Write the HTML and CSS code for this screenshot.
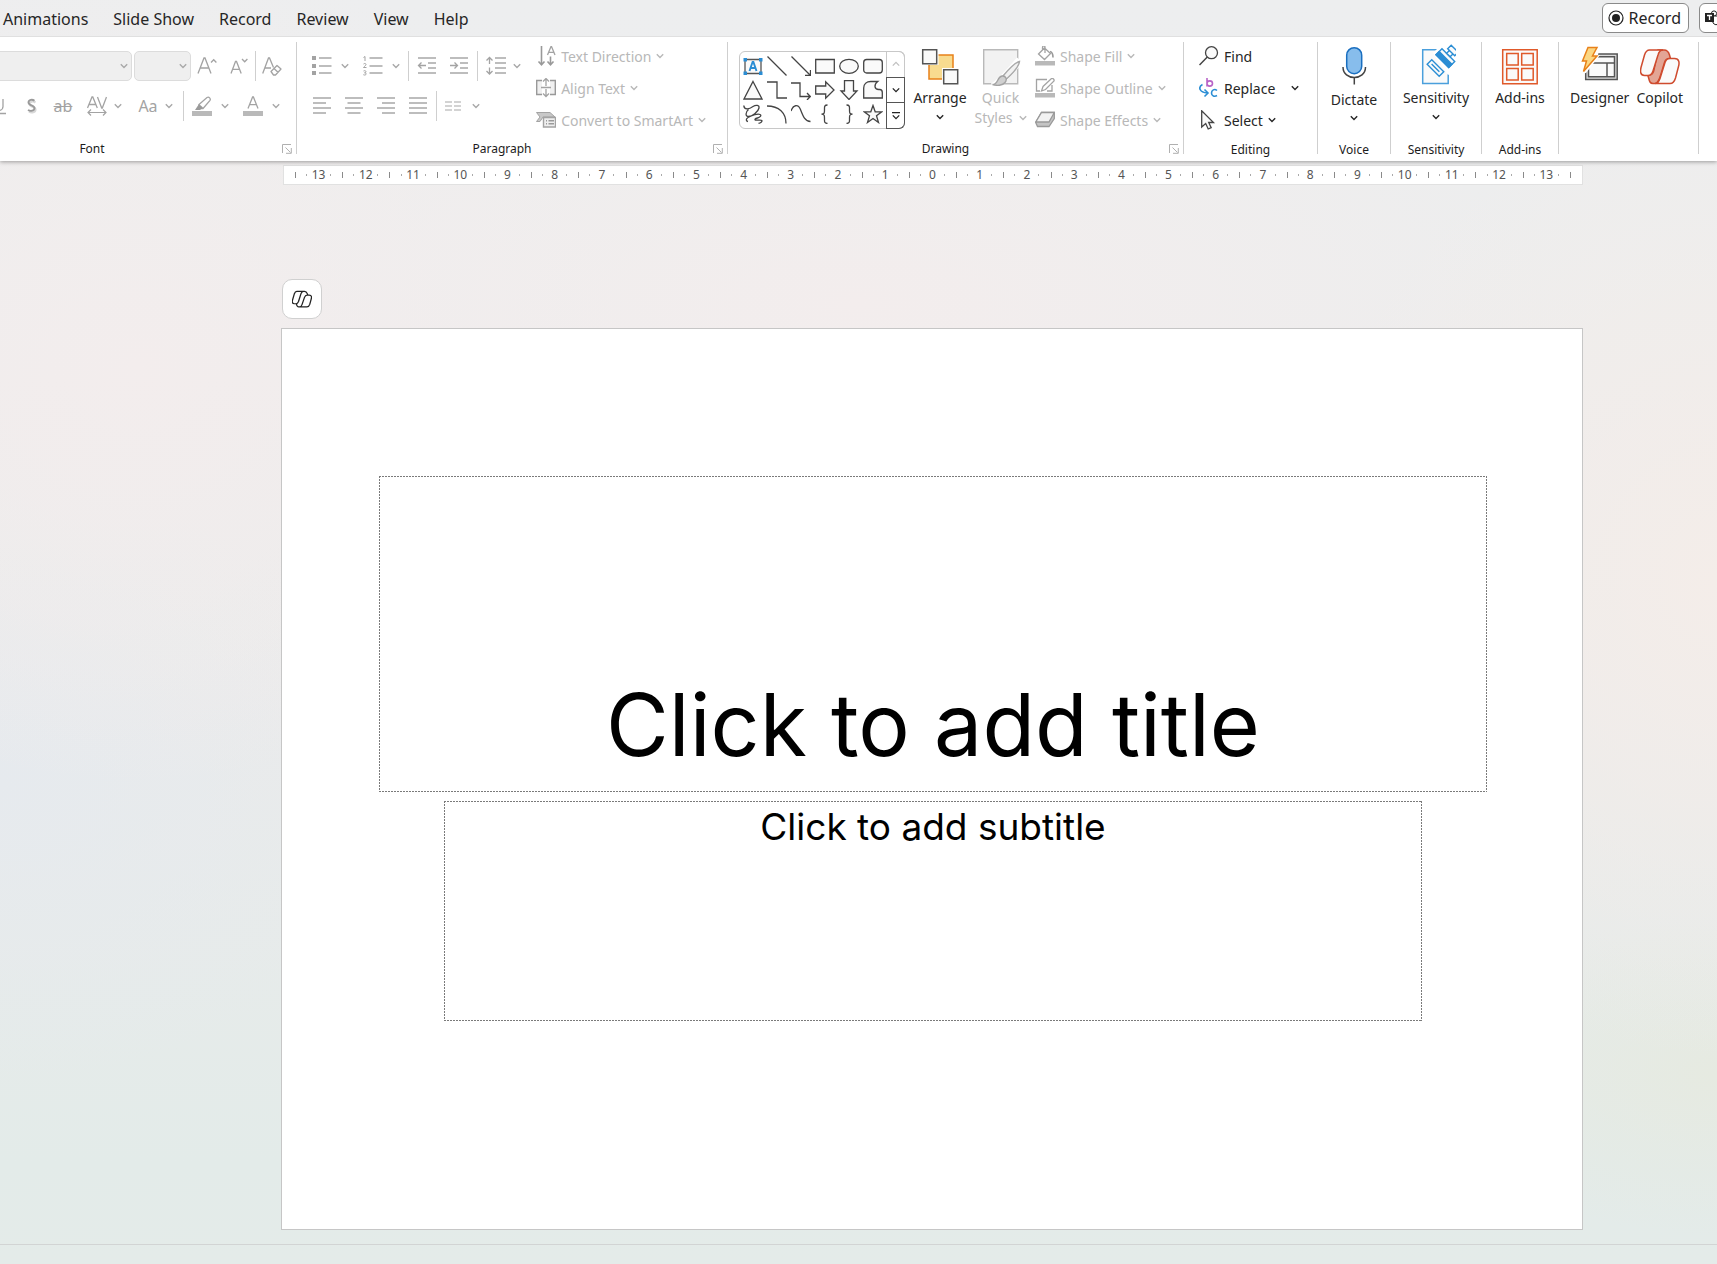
FILE: index.html
```html
<!DOCTYPE html>
<html lang="en">
<head>
<meta charset="utf-8">
<title>Presentation editor</title>
<link rel="stylesheet" href="styles.css">
</head>
<body>
<svg class="defs" aria-hidden="true">
  <symbol id="chev" viewBox="0 0 8 8"><path d="M.8 2.2 4 5.4 7.2 2.2" fill="none" stroke="currentColor" stroke-width="1.4"/></symbol>
  <symbol id="launch" viewBox="0 0 10 10"><path d="M.5 9V.5H9M3.5 3.5 8.5 8.5M9.3 4V9.3H4" fill="none" stroke="currentColor"/></symbol>
</svg>

<header class="tabs">
  <nav class="tab-list" aria-label="Ribbon tabs">
    <a href="#animations">Animations</a>
    <a href="#slideshow">Slide Show</a>
    <a href="#record">Record</a>
    <a href="#review">Review</a>
    <a href="#view">View</a>
    <a href="#help">Help</a>
  </nav>
  <div class="tab-actions">
    <button class="pill" type="button">
      <svg width="16" height="16" viewBox="0 0 16 16"><circle cx="8" cy="8" r="7" fill="none" stroke="#222" stroke-width="1.2"/><circle cx="8" cy="8" r="4" fill="#222"/></svg>
      Record
    </button>
    <button class="pill pill-cut" type="button" aria-label="Present in Teams">
      <svg width="20" height="16" viewBox="0 0 20 16"><circle cx="9" cy="3.5" r="2.6" fill="#fff" stroke="#222"/><path d="M8 6h8v5a4.500 4.500 0 0 1-8 2z" fill="#fff" stroke="#222"/><path d="M0 3h9v9H0z" fill="#222"/><path d="M2 5.500h5M4.500 5.500V10" stroke="#fff" stroke-width="1.300"/></svg>
    </button>
  </div>
</header>

<section class="ribbon" aria-label="Home">
  <div class="group group-font">
    <div class="body">
      <div class="rows">
        <div class="row row-first">
          <button class="combo combo-font" type="button" aria-label="Font"><svg class="chev"><use href="#chev"/></svg></button>
          <button class="combo combo-size" type="button" aria-label="Font size"><svg class="chev"><use href="#chev"/></svg></button>
          <div class="set">
            <button class="tool" type="button" aria-label="Increase font size"><svg viewBox="0 0 20 20"><path d="M1 17.500 7 2h1l6 15.500M3.200 12h8.600" class="s"/><path d="m14 6.500 2.700-2.800 2.700 2.800" class="s"/></svg></button>
            <button class="tool" type="button" aria-label="Decrease font size"><svg viewBox="0 0 20 20"><path d="M2 17.500 6.500 5.500h1l4.700 12M3.700 13.300h6.800" class="s"/><path d="m13 3 2.700 2.800L18.400 3" class="s"/></svg></button>
          </div>
          <i class="sep"></i>
          <button class="tool" type="button" aria-label="Clear formatting"><svg viewBox="0 0 20 20"><path d="M.700 17.500 6.500 2h1l4 9.500M3 12h6" class="s"/><path d="m9 15.500 6-6 4 3.500-5.500 6H11.500zM12 12.500l4 3.700" class="s" stroke-linejoin="round"/></svg></button>
        </div>
        <div class="row row-second">
          <div class="set">
            <button class="tool" type="button" aria-label="Underline"><svg viewBox="0 0 20 20"><path d="M6 3v7.500a4 4 0 0 0 8 0V3M4.500 17.500h12.500" class="s"/></svg></button>
            <button class="tool" type="button" aria-label="Text shadow"><svg viewBox="0 0 20 20"><path d="M14.500 6.500c-2-1.500-6-1.500-6 1.500s6 2.500 6 5.500-4 3.500-6.500 2" fill="none" stroke="#d8d8d8" stroke-width="2.200"/><path d="M13.500 4.700c-2-1.500-6-1.400-6 1.700s6 2.600 6 5.600-4 3.500-6.500 2" fill="none" stroke="#999" stroke-width="1.900"/></svg></button>
            <button class="tool" type="button" aria-label="Strikethrough"><span class="glyph strike">ab</span></button>
          </div>
          <button class="split split-tight" type="button" aria-label="Character spacing"><svg class="ico" viewBox="0 0 20 20"><path d="M.500 12 5 1h.800l4.500 11M2 8.500h6.800M10.500 1l4.200 11h.600l4.200-11" class="s"/><path d="M1 16.500h18M4 13.500l-3 3 3 3M16 13.500l3 3-3 3" class="s thin"/></svg><svg class="chev"><use href="#chev"/></svg></button>
          <button class="split split-tight" type="button" aria-label="Change case"><span class="glyph">Aa</span><svg class="chev"><use href="#chev"/></svg></button>
          <i class="sep"></i>
          <button class="split" type="button" aria-label="Highlight colour"><svg class="ico" viewBox="0 0 20 20"><path d="M0 15h20v5H0z" fill="#b9b9b9"/><path d="m7 8.500 8-7c2-1 4 1 3 2.800L11 12.500H7.500z" class="s"/><path d="M7 8 3 14h5l3-2.500z" fill="#9a9a9a"/></svg><svg class="chev"><use href="#chev"/></svg></button>
          <button class="split" type="button" aria-label="Font colour"><svg class="ico" viewBox="0 0 20 20"><path d="M0 15h20v5H0z" fill="#b9b9b9"/><path d="M5 12.500 9.600 1h.800L15 12.500M6.700 8.700h6.600" class="s"/></svg><svg class="chev"><use href="#chev"/></svg></button>
        </div>
      </div>
    </div>
    <div class="foot"><span>Font</span><button class="launcher" type="button" aria-label="Font settings"><svg><use href="#launch"/></svg></button></div>
  </div>

  <div class="group group-para">
    <div class="body">
      <div class="rows">
        <div class="row">
          <button class="split" type="button" aria-label="Bullets"><svg class="ico" viewBox="0 0 20 20"><path d="M0 0h4v4H0zM0 8h4v4H0zM0 15h4v4H0z" fill="#a3a3a3"/><path d="M7 2h12.500M7 10h12.500M7 17h12.500" class="l"/></svg><svg class="chev"><use href="#chev"/></svg></button>
          <button class="split" type="button" aria-label="Numbering"><svg class="ico" viewBox="0 0 20 20"><path d="m.500 1.500 1.500-1V5M.500 8c1-1 2.500-.500 2.500.500S.500 11 .500 11.500H3.500M.500 15c1-.600 2.500-.300 2.500.700s-1.500 1.100-1.500 1.100 1.700 0 1.700 1.100-1.700 1.500-2.900.800" fill="none" stroke="#a3a3a3"/><path d="M6.500 2h13M6.500 10h13M6.500 17h13" class="l"/></svg><svg class="chev"><use href="#chev"/></svg></button>
          <i class="sep"></i>
          <div class="set">
            <button class="tool" type="button" aria-label="Decrease indent"><svg viewBox="0 0 20 20"><path d="M1 2h18M11 7h8M11 12h8M1 17h18" class="l"/><path d="M1.500 9.500H9M4.500 6.500l-3 3 3 3" class="s"/></svg></button>
            <button class="tool" type="button" aria-label="Increase indent"><svg viewBox="0 0 20 20"><path d="M1 2h18M11 7h8M11 12h8M1 17h18" class="l"/><path d="M1 9.500h7.500M5.500 6.500l3 3-3 3" class="s"/></svg></button>
          </div>
          <i class="sep"></i>
          <button class="split split-tight" type="button" aria-label="Line spacing"><svg class="ico" viewBox="0 0 20 20"><path d="M9 2h11M9 7h11M9 12h11M9 17h11" class="l"/><path d="M3.500 1.500V8M.500 4.500l3-3 3 3M3.500 11.500V18M.500 15l3 3 3-3" class="s"/></svg><svg class="chev"><use href="#chev"/></svg></button>
        </div>
        <div class="row">
          <div class="set">
            <button class="tool" type="button" aria-label="Align left"><svg viewBox="0 0 20 20"><path d="M1 2h18M1 7h13M1 12h18M1 17h13" class="l"/></svg></button>
            <button class="tool" type="button" aria-label="Centre"><svg viewBox="0 0 20 20"><path d="M1 2h18M3.500 7h13M1 12h18M3.500 17h13" class="l"/></svg></button>
            <button class="tool" type="button" aria-label="Align right"><svg viewBox="0 0 20 20"><path d="M1 2h18M6 7h13M1 12h18M6 17h13" class="l"/></svg></button>
            <button class="tool" type="button" aria-label="Justify"><svg viewBox="0 0 20 20"><path d="M1 2h18M1 7h18M1 12h18M1 17h18" class="l"/></svg></button>
          </div>
          <i class="sep"></i>
          <button class="split split-tight" type="button" aria-label="Columns"><svg class="ico" viewBox="0 0 20 20"><path d="M0 6h7M0 10h7M0 14h7M9 6h7M9 10h7M9 14h7" class="l thin"/></svg><svg class="chev"><use href="#chev"/></svg></button>
        </div>
      </div>
      <div class="cmds off">
        <button class="cmd" type="button"><svg class="ico" viewBox="0 0 20 20"><path d="M5.500 0v18.500M2.500 15.500l3 3.300 3-3.300" class="s heavy"/><path d="M11.500 9 15 .500h.500L19 9M12.700 6.300h5" class="s"/><path d="M14.500 10.500v8M11.500 15.500l3 3.300 3-3.300" class="s heavy"/></svg>Text Direction<svg class="chev"><use href="#chev"/></svg></button>
        <button class="cmd" type="button"><svg class="ico" viewBox="0 0 20 20"><path d="M6 2.500H.700v14H6M14 2.500h5.300v14H14" fill="#f0f0f0" stroke="#999" stroke-width="1.400"/><path d="M5 9.500h10M10 1v7M10 11v7.500M7 3.500l3-3 3 3M7 15.500l3 3 3-3" class="s"/></svg>Align Text<svg class="chev"><use href="#chev"/></svg></button>
        <button class="cmd" type="button"><svg class="ico" viewBox="0 0 20 20"><path d="M.500 2.500H14L19 7H7l-3 4.500H.500L4 7z" fill="#c8c8c8" stroke="#a3a3a3"/><path d="M7.500 7.500h12v9.500h-12z" fill="#eee" stroke="#a3a3a3" stroke-width="1.400"/><path d="M10 10.700h1M12.500 10.700H18M10 13.700h1M12.500 13.700H18" stroke="#999" stroke-width="1.400"/></svg>Convert to SmartArt<svg class="chev"><use href="#chev"/></svg></button>
      </div>
    </div>
    <div class="foot"><span>Paragraph</span><button class="launcher" type="button" aria-label="Paragraph settings"><svg><use href="#launch"/></svg></button></div>
  </div>

  <div class="group group-draw">
    <div class="body">
      <div class="gallery">
        <div class="shapes">
          <button type="button" aria-label="Text box"><svg viewBox="0 0 20 20"><path d="M2 3.500h16v14H2z" fill="#fafafa" stroke="#555" stroke-width="1.300"/><path d="M6.500 15 9.600 6h.800L13.500 15M7.500 12h5" fill="none" stroke="#2a8dd4" stroke-width="1.900"/><path d="M.500 2h3.500v3.500H.500zM16 2h3.500v3.500H16zM.500 15.500H4V19H.500zM16 15.500h3.500V19H16z" fill="#2a8dd4" stroke="none"/></svg></button>
          <button type="button" aria-label="Line"><svg viewBox="0 0 20 20"><path d="m.500.500 19 19"/></svg></button>
          <button type="button" aria-label="Arrow line"><svg viewBox="0 0 20 20"><path d="m.500.500 19 19M19.500 14v5.500H14"/></svg></button>
          <button type="button" aria-label="Rectangle"><svg viewBox="0 0 20 20"><path d="M.700 3.500h18.600v13.500H.700z"/></svg></button>
          <button type="button" aria-label="Oval"><svg viewBox="0 0 20 20"><ellipse cx="10" cy="10.300" rx="9.300" ry="7"/></svg></button>
          <button type="button" aria-label="Rounded rectangle"><svg viewBox="0 0 20 20"><rect x=".700" y="3.500" width="18.600" height="13.500" rx="3"/></svg></button>
          <button type="button" aria-label="Triangle"><svg viewBox="0 0 20 20"><path d="M10 1.500 19 19H1z"/></svg></button>
          <button type="button" aria-label="Elbow connector"><svg viewBox="0 0 20 20"><path d="M0 2h10v16h10" fill="none"/></svg></button>
          <button type="button" aria-label="Elbow arrow connector"><svg viewBox="0 0 20 20"><path d="M0 3h9v13.500h10M16 13l3.300 3.500L16 20" fill="none"/></svg></button>
          <button type="button" aria-label="Right arrow"><svg viewBox="0 0 20 20"><path d="M.700 6h10V1.700L19 10l-8.300 8.300V14H.700z"/></svg></button>
          <button type="button" aria-label="Down arrow"><svg viewBox="0 0 20 20"><path d="M5.500.700h9V11H18l-8 8.500L2 11h3.500z"/></svg></button>
          <button type="button" aria-label="Freeform"><svg viewBox="0 0 20 20"><path d="M.700 18V8c0-4 3-6.500 7-6.500h7c-4 3-3.500 8 1 8h1c2 0 2.600 1.500 2.600 3V18z"/></svg></button>
          <button type="button" aria-label="Scribble"><svg viewBox="0 0 20 20"><path d="M.800 1.500C1 6 6 5.500 10 2.500c3-2 6.500-1.500 6 1.500-.800 4-7 8.500-10.500 8.500C2 12.500 2.500 8 5.500 5.500M5 17.500C3 17 2.500 15 5 13.500c4-2.500 10-4 12-3s0 3-2.500 3.500-3.500 2-1.500 2.200 5-.700 5.800.300-1.300 2.500-3.300 2.800" style="fill:none"/></svg></button>
          <button type="button" aria-label="Arc"><svg viewBox="0 0 20 20"><path class="open" d="M0 2c12 0 19 7 19 17.500"/></svg></button>
          <button type="button" aria-label="Curve"><svg viewBox="0 0 20 20"><path class="open" d="M0 7c2-6 7-7.500 9.500-1.500C12 12 14 17.500 19.500 17.500"/></svg></button>
          <button type="button" aria-label="Left brace"><svg viewBox="0 0 20 20"><path class="open" d="M12.500 1C9 1 9.500 3 9.500 6s0 4-3 4.200c3 .200 3 1.200 3 4.200s-.500 5 3 5"/></svg></button>
          <button type="button" aria-label="Right brace"><svg viewBox="0 0 20 20"><path class="open" d="M7.500 1c3.500 0 3 2 3 5s0 4 3 4.200c-3 .200-3 1.200-3 4.200s.500 5-3 5"/></svg></button>
          <button type="button" aria-label="Star"><svg viewBox="0 0 20 20"><path d="m10 1.500 2.200 6.300h6.600l-5.300 4 2 6.700L10 14.500l-5.500 4 2-6.700-5.300-4h6.600z"/></svg></button>
        </div>
        <div class="scroll">
          <button type="button" aria-label="Scroll up" disabled><svg viewBox="0 0 8 8"><path d="M.800 5.600 4 2.400l3.200 3.200"/></svg></button>
          <button type="button" aria-label="Scroll down"><svg viewBox="0 0 8 8"><path d="M.800 2.400 4 5.600l3.200-3.200"/></svg></button>
          <button type="button" aria-label="More shapes"><svg viewBox="0 0 8 8"><path d="M0 .600h8M.800 3.400 4 6.600l3.200-3.200"/></svg></button>
        </div>
      </div>
      <button class="big big-arrange" type="button">
        <svg class="pic" viewBox="0 0 40 40"><path d="M9 10h24v24H9z" fill="#f8db8f" stroke="#e8811a" stroke-width="1.500"/><path d="M1.500 2.500h17v17.500h-17zM22 23h17v17h-17z" fill="#fff"/><path d="M2.700 4.700h14v14h-14zM23.700 24.700h14v14h-14z" fill="#fafafa" stroke="#555" stroke-width="1.500"/></svg>
        <span>Arrange</span><svg class="chev"><use href="#chev"/></svg>
      </button>
      <button class="big off" type="button">
        <svg class="pic" viewBox="0 0 40 40"><path d="M2.700 4.700h34v34h-34z" fill="#f2f2f2" stroke="#b9b9b9" stroke-width="1.400"/><path d="M12 42c7-4 15-13 27-27" stroke="#fff" stroke-width="8" fill="none"/><path d="M22 31C27 25 33 18 38.500 16.500 38 22 31 29 25.500 34z" fill="#f2f2f2" stroke="#aaa" stroke-width="1.400"/><path d="M11.500 39.500c6 0 4-7 9.500-8.500 4-.500 5.500 3.500 3 6.500-2.500 3-8 3.500-12.500 2z" fill="#d0d0d0" stroke="#a3a3a3" stroke-width="1.400"/></svg>
        <span>Quick</span><span class="inline">Styles <svg class="chev"><use href="#chev"/></svg></span>
      </button>
      <div class="cmds off">
        <button class="cmd" type="button"><svg class="ico" viewBox="0 0 20 20"><path d="M0 15h20v4.500H0z" fill="#b9b9b9"/><path d="m3.500 8 6-6 6 5.500-6 6zM10 7V1c0-1.500-2.500-1.500-2.500.500v3" class="s"/><path d="M15 5.500c2 .500 3 2 3 6" class="s heavy"/></svg>Shape Fill<svg class="chev"><use href="#chev"/></svg></button>
        <button class="cmd" type="button"><svg class="ico" viewBox="0 0 20 20"><path d="M0 15h20v4.500H0z" fill="#b9b9b9"/><path d="M12 1.500H1.500V13H5M17 7v6h-5" class="s"/><path d="m8 8.500 8.500-8c1.500-.500 3 1 2.500 2.500l-8.500 8.500-4 1.500z" class="s"/></svg>Shape Outline<svg class="chev"><use href="#chev"/></svg></button>
        <button class="cmd" type="button"><svg class="ico" viewBox="0 0 20 20"><path d="M6.500 2.500h12.800v6L14 16.500H2.500L.700 12.500z" fill="#c4c4c4" stroke="#999" stroke-width="1.300"/><path d="M6.500 2.500h12.800L14 12H.800z" fill="#f2f2f2" stroke="#999" stroke-width="1.300"/></svg>Shape Effects<svg class="chev"><use href="#chev"/></svg></button>
      </div>
    </div>
    <div class="foot"><span>Drawing</span><button class="launcher" type="button" aria-label="Drawing settings"><svg><use href="#launch"/></svg></button></div>
  </div>

  <div class="group group-edit">
    <div class="body">
      <div class="cmds">
        <button class="cmd" type="button"><svg class="ico" viewBox="0 0 20 20"><circle cx="12.500" cy="6.700" r="6" fill="#fafafa" stroke="#444" stroke-width="1.300"/><path d="M8.300 11 .500 19" stroke="#444" stroke-width="1.500"/></svg>Find</button>
        <div class="pair">
          <button class="cmd" type="button"><svg class="ico" viewBox="0 0 20 20"><path d="M8 0v8.500M8 5.500c0-3.500 5.500-3.500 5.500 0s-5.500 3.500-5.500 0" fill="none" stroke="#b864c8" stroke-width="1.600"/><path d="M3.500 6.500C-1 9 0 14.500 8.500 15M5.500 11.500 9 15l-3.500 3.500M18 12.500c-2.500-2-5.500-.500-5.500 2.500s3 4 5.500 2.500" fill="none" stroke="#2a8dd4" stroke-width="1.600"/></svg>Replace</button>
          <button class="more" type="button" aria-label="Replace options"><svg class="chev"><use href="#chev"/></svg></button>
        </div>
        <button class="cmd" type="button"><svg class="ico" viewBox="0 0 20 20"><path d="M2.700.800V17l4-3.500 2.500 5.500 3-1.300-2.500-5.200h4.800z" fill="#fafafa" stroke="#444" stroke-width="1.300"/></svg>Select<svg class="chev"><use href="#chev"/></svg></button>
      </div>
    </div>
    <div class="foot foot-low"><span>Editing</span></div>
  </div>

  <div class="group group-voice">
    <div class="body">
      <button class="big" type="button">
        <svg class="pic" viewBox="0 0 40 40"><rect x="12.700" y="2.700" width="15" height="26" rx="7.500" fill="#87bdec" stroke="#1a6fc0" stroke-width="1.500"/><path d="M9 22c0 14 22.500 14 22.500 0M20.300 33v6.500" fill="none" stroke="#444" stroke-width="1.500"/></svg>
        <span>Dictate</span><svg class="chev"><use href="#chev"/></svg>
      </button>
    </div>
    <div class="foot foot-low"><span>Voice</span></div>
  </div>

  <div class="group group-sens">
    <div class="body">
      <button class="big" type="button">
        <svg class="pic" viewBox="0 0 40 40"><path d="M6.700 4.700h25.500V38.500H6.700z" fill="#fafafa" stroke="#4a9fdc" stroke-width="1.500"/><path d="m17 8 8-8 18 6-4 20-7 4z" fill="#fff"/><g transform="rotate(45 26 15)" fill="#fafafa" stroke="#2a8dd4" stroke-width="1.400"><path d="M18 7h18v8.500H18z"/><path d="M18 11h18v4.500H18z" fill="#2a8dd4"/><path d="M24.500 3h5v4h-5zM22-2h10v5H22z"/><path d="M18.500 22h17v6.500h-17zM21.500 25.200h11"/></g></svg>
        <span>Sensitivity</span><svg class="chev"><use href="#chev"/></svg>
      </button>
    </div>
    <div class="foot foot-low"><span>Sensitivity</span></div>
  </div>

  <div class="group group-add">
    <div class="body">
      <button class="big" type="button">
        <svg class="pic" viewBox="0 0 40 40"><path d="M2.700 4.700h34.500v34H2.700zM6.700 8.500h11.500V20H6.700zM21.700 8.500h11.500V20H21.700zM6.700 23.500h11.500V35H6.700zM21.700 23.500h11.500V35H21.700z" fill="#fafafa" stroke="#e0592a" stroke-width="1.500"/></svg>
        <span>Add-ins</span>
      </button>
    </div>
    <div class="foot foot-low"><span>Add-ins</span></div>
  </div>

  <div class="group group-ai">
    <div class="body">
      <button class="big" type="button">
        <svg class="pic" viewBox="0 0 40 40"><path d="M5.700 9h31.500v25.500H5.700z" fill="#ddd" stroke="#555" stroke-width="1.500"/><path d="M8.500 11.700h26v20h-26zM8.500 18h26M27 18v13.700" fill="#fafafa" stroke="#555" stroke-width="1.500"/><path d="M6 0h14l-2 10h2L6 28-1 29 0 8z" fill="#fff"/><path d="M8 2.500h9L12.500 11H17L3.500 26.500 6.500 16H2.500z" fill="#fbd783" stroke="#e8811a" stroke-width="1.500"/></svg>
        <span>Designer</span>
      </button>
      <button class="big" type="button">
        <svg class="pic" viewBox="0 0 40 40"><path d="M18 5h6c3 0 4.500 1.500 5.500 5l1 3.500c-3-.500-5 .500-6 4L21 29c-1.500 5-3 9.500-6 9.500h-2c-3 0-3.500-2-4.500-6l-.800-2.500c3 .500 5-.500 6-4z" fill="#e3a595" stroke="#cf4b2e" stroke-width="1.500"/><path d="M9.500 5H23c-3 0-4 1.500-5 5l-5 16c-1 3-2 4.500-5 4.500H4.500C0 30.500.200 26 1 22.500L4.500 10c1-3 2-5 5-5zM30 38.500H15c3 0 4-2 5-5l5-16c1-3 2.500-4 5-4h4.500c5 0 5 4.500 4 8L35.500 33c-1 3.500-2.500 5.500-5.500 5.500z" fill="#fafafa" stroke="#cf4b2e" stroke-width="1.500"/></svg>
        <span>Copilot</span>
      </button>
    </div>
    <div class="foot"></div>
  </div>
</section>

<main class="workspace">
  <div class="ruler" aria-hidden="true">
    <span>13</span><span>12</span><span>11</span><span>10</span><span>9</span><span>8</span><span>7</span><span>6</span><span>5</span><span>4</span><span>3</span><span>2</span><span>1</span><span>0</span><span>1</span><span>2</span><span>3</span><span>4</span><span>5</span><span>6</span><span>7</span><span>8</span><span>9</span><span>10</span><span>11</span><span>12</span><span>13</span>
  </div>
  <button class="assist" type="button" aria-label="Copilot">
    <svg width="20" height="18" viewBox="0 0 40 40" preserveAspectRatio="none"><path d="M18 3h7c3 0 4.500 2 5.500 5l1 3.500M8.500 30.500c1 5 2 7 5 7h2M9.500 3H23c-3 0-4 1.500-5 5l-5 17.500c-1 3-2 5-5 5H4.500C0 30.500.200 26 1 22.500L4.500 9c1-3 2-6 5-6zM30 37.500H15c3 0 4-2 5-5l5-16c1-3 2.500-5 5-5h4.500c5 0 5 4.500 4 8L35.500 32c-1 3.500-2.500 5.500-5.500 5.500z" fill="none" stroke="#222" stroke-width="2.600"/></svg>
  </button>
  <article class="slide">
    <h1 class="holder title">Click to add title</h1>
    <p class="holder subtitle">Click to add subtitle</p>
  </article>
</main>
<footer class="status"></footer>
</body>
</html>
```
FILE: styles.css
```css
* { box-sizing: border-box; }

body {
  margin: 0;
  min-height: 100vh;
  display: flex;
  flex-direction: column;
  overflow-x: hidden;
  font-family: "Noto Sans", "Open Sans", sans-serif;
  font-size: 14px;
  color: #262626;
  background:
    radial-gradient(ellipse 500px 420px at 8% 29%, #f3eded, transparent),
    radial-gradient(ellipse 700px 260px at 50% 24%, #f3eded, transparent),
    radial-gradient(ellipse 420px 480px at 100% 46%, #f4ede9, transparent),
    radial-gradient(ellipse 400px 300px at 0 62%, #e6eaee, transparent),
    radial-gradient(ellipse 300px 160px at 100% 85%, #e6eae1, transparent),
    linear-gradient(#edeeef 0, #ededed 30%, #ebebeb 55%, #e3ebe9 92%, #e4ebe9 100%);
}

button {
  margin: 0;
  padding: 0;
  border: 0;
  background: none;
  font: inherit;
  color: inherit;
}

svg { display: block; flex: none; }
.defs { position: absolute; width: 0; height: 0; }
.chev { width: 8px; height: 8px; }
.ico { width: 20px; height: 20px; }

.s { fill: none; stroke: #a3a3a3; stroke-width: 1.300; }
.l { fill: none; stroke: #a8a8a8; stroke-width: 1.600; }
.thin { stroke-width: 1.200; }
.heavy { stroke: #999; stroke-width: 1.600; }

/* Tab strip */
.tabs {
  display: flex;
  justify-content: space-between;
  height: 36px;
  overflow: hidden;
  font-size: 16px;
}
.tab-list { display: flex; gap: 25px; padding-left: 3px; line-height: 38px; }
.tab-list a { color: inherit; text-decoration: none; }
.tab-actions { display: flex; gap: 10px; padding-top: 3px; margin-right: -18px; }
.pill {
  display: flex;
  align-items: center;
  gap: 5px;
  height: 30px;
  padding: 0 7px 0 5px;
  border: 1px solid #8a8a8a;
  border-radius: 6px;
  background: #fff;
}
.pill-cut { width: 36px; }

/* Ribbon */
.ribbon {
  display: flex;
  height: 125px;
  padding: 5px 0 7px;
  border-top: 1px solid #e0e0e0;
  background: #fff;
  box-shadow: 0 1px 4px rgba(0, 0, 0, .35);
  overflow: hidden;
  clip-path: inset(0 0 -8px 0);
}
.group {
  flex: none;
  display: flex;
  flex-direction: column;
  justify-content: space-between;
  border-right: 1px solid #cfcfcf;
}
.group-font { width: 389px; margin-left: -92px; }
.group-para { width: 431px; }
.group-draw { width: 456px; }
.group-edit { width: 134px; }
.group-voice { width: 73px; }
.group-sens { width: 91px; }
.group-add { width: 77px; }
.group-ai { width: 140px; }

.body { display: flex; }
.rows { display: flex; flex-direction: column; gap: 10px; padding-top: 9px; }
.row { display: flex; align-items: center; gap: 2px; height: 30px; color: #a8a8a8; }
.set { display: flex; }
.sep { width: 1px; height: 30px; background: #cfcfcf; }
.tool { width: 32px; height: 30px; padding: 0 6px; }
.tool svg { width: 20px; height: 20px; }
.split { display: flex; align-items: center; gap: 9px; height: 30px; padding: 0 6px; }
.split-tight { gap: 7px; padding-right: 8px; }
.glyph { display: block; width: 20px; color: #a3a3a3; font-size: 16px; line-height: 20px; }
.strike { text-decoration: line-through; }
.combo {
  display: flex;
  align-items: center;
  justify-content: flex-end;
  height: 30px;
  padding-right: 3px;
  border: 1px solid #dcdcdc;
  border-radius: 5px;
  background: #efefef;
}
.combo-font { width: 200px; margin-right: 2px; }
.combo-size { width: 57px; }

.group-font .body { justify-content: flex-end; padding-right: 8px; }
.group-font .row { justify-content: flex-end; }
.row-first { gap: 0; }
.group-font .row-second { padding-right: 2px; }
.group-para .body { justify-content: space-between; padding: 0 21px 0 9px; }

.foot { display: flex; align-items: center; height: 16px; margin-bottom: -3px; font-size: 12px; line-height: 16px; color: #1c1c1c; }
.foot-low { margin-bottom: -4px; }
.foot span { flex: 1; text-align: center; }
.launcher { width: 20px; height: 10px; padding-left: 6px; color: #b0b0b0; }
.launcher svg { width: 10px; height: 10px; }

.cmds { display: flex; flex-direction: column; margin-top: -2px; }
.cmd { display: flex; align-items: center; gap: 5px; height: 32px; white-space: nowrap; }
.off { color: #b8b8b8; }
.pair { display: flex; gap: 16px; }

.big {
  display: flex;
  flex-direction: column;
  align-items: center;
  padding-top: 2px;
  line-height: 20px;
}
.big .pic { width: 40px; height: 42px; margin-bottom: 2px; }
.big > .chev { margin-top: 5px; }
.inline { display: flex; align-items: center; gap: 6px; }

.group-draw .body { padding-left: 11px; }
.gallery {
  display: flex;
  width: 166px;
  height: 78px;
  margin-top: 9px;
  border: 1px solid #c8c8c8;
  border-radius: 6px;
}
.shapes {
  flex: 1;
  display: grid;
  grid-template-columns: repeat(6, 24px);
  grid-auto-rows: 24px;
  padding: 2px 0 0 1px;
}
.shapes button { padding: 2px; }
.shapes svg { width: 20px; height: 20px; fill: #fafafa; stroke: #444; stroke-width: 1.300; }
.shapes .open { fill: none; }
.scroll { display: flex; flex-direction: column; width: 19px; margin: -1px -1px -1px 0; }
.scroll button { flex: 1; display: grid; place-items: center; border: 1px solid #555; }
.scroll button:first-child { border-color: #c8c8c8; border-bottom: 0; border-top-right-radius: 6px; }
.scroll button + button + button { border-top: 0; border-bottom-right-radius: 6px; }
.scroll svg { width: 8px; height: 8px; fill: none; stroke: #222; stroke-width: 1.300; }
.scroll button:disabled svg { stroke: #c0c0c0; }
.big-arrange { width: 70px; }
.group-draw .big.off { width: 51px; }
.group-draw .cmds { padding-left: 9px; }

.group-edit .body { padding-left: 15px; }
.group-voice .body, .group-sens .body, .group-add .body { justify-content: center; }
.group-voice .big .pic { margin-bottom: 4px; }
.group-voice .big > .chev { margin-top: 4px; }
.group-ai .body { gap: 7px; padding-left: 11px; }

/* Canvas */
.workspace {
  flex: 1;
  display: flex;
  flex-direction: column;
  padding: 4px 134px 14px 281px;
}
.ruler {
  display: flex;
  height: 20px;
  margin: 0 0 0 2px;
  padding: 0 11px 0 11px;
  border: 1px solid #e1e1e1;
  background: #fff;
  font-size: 12px;
  line-height: 17px;
  text-align: center;
  color: #555;
}
.ruler span {
  flex: 1 1 0;
  min-width: 0;
  background:
    linear-gradient(#8a8a8a, #8a8a8a) 0 6px / 1px 6px no-repeat,
    linear-gradient(#aaa, #aaa) 24% 8px / 1px 2px no-repeat,
    linear-gradient(#aaa, #aaa) 76% 8px / 1px 2px no-repeat;
}
.ruler span:last-child { border-right: 1px solid transparent; border-image: linear-gradient(transparent 6px, #8a8a8a 6px, #8a8a8a 12px, transparent 12px) 1; }
.assist {
  display: grid;
  place-items: center;
  width: 40px;
  height: 40px;
  margin: 94px 0 9px 1px;
  border: 1px solid #d0d0d0;
  border-radius: 10px;
  background: #fff;
}
.slide {
  min-height: 902px;
  padding-top: 147px;
  border: 1px solid #c6c6c6;
  background: #fff;
  color: #000;
  font-family: Inter, "Noto Sans", sans-serif;
  text-align: center;
}
.holder {
  --h: repeating-linear-gradient(90deg, #7a7a7a 0 2px, transparent 2px 3px);
  --v: repeating-linear-gradient(#7a7a7a 0 2px, transparent 2px 3px);
  margin: 0;
  font-weight: 400;
  background:
    var(--h) top / 100% 1px no-repeat,
    var(--h) bottom / 100% 1px no-repeat,
    var(--v) left / 1px 100% no-repeat,
    var(--v) right / 1px 100% no-repeat;
}
.title {
  display: flex;
  align-items: flex-end;
  justify-content: center;
  min-height: 316px;
  margin: 0 95px 9px 97px;
  padding-bottom: 17px;
  font-size: 86px;
  line-height: 100px;
}
.subtitle {
  min-height: 220px;
  margin: 0 160px 0 162px;
  padding-top: 4px;
  font-size: 37px;
  line-height: 44px;
}

.status { height: 20px; border-top: 1px solid #d2d4d4; }
```
